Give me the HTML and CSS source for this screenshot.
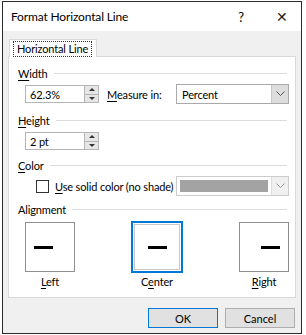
FILE: index.html
```html
<!DOCTYPE html>
<html lang="en">
  <head>
    <meta charset="UTF-8" />
    <title>Format Horizontal Line</title>
    <link rel="stylesheet" href="styles.css">
  </head>
  <body>
    <div class="window">
      <div class="titlebar">
        <span class="title">Format Horizontal Line</span>
        <span class="help">?</span>
        <span class="close">&#x2715;</span>
      </div>

      <div class="content">
        <div class="tabs">
          <div class="tab"><span class="focus">Horizontal Line</span></div>
        </div>

        <div class="panel">
          <div class="group"><span><u>W</u>idth</span></div>
          <div class="row first">
            <div class="spin">
              <div class="field">62.3%</div>
              <div class="arrows"><span class="up"></span><span class="down"></span></div>
            </div>
            <span class="measure"><u>M</u>easure in:</span>
            <div class="select">
              <div class="value">Percent</div>
              <div class="drop"><svg width="9" height="6" viewBox="0 0 9 6"><path d="M0.5 0.5 L4.5 4.5 L8.5 0.5" fill="none" stroke="#555" stroke-width="1"/></svg></div>
            </div>
          </div>

          <div class="group"><span><u>H</u>eight</span></div>
          <div class="row">
            <div class="spin">
              <div class="field">2 pt</div>
              <div class="arrows"><span class="up"></span><span class="down"></span></div>
            </div>
          </div>

          <div class="group"><span><u>C</u>olor</span></div>
          <div class="row last">
            <label class="check"><span class="box"></span><span><u>U</u>se solid color (no shade)</span></label>
            <div class="select disabled">
              <div class="value"><span class="swatch"></span></div>
              <div class="drop"><svg width="9" height="6" viewBox="0 0 9 6"><path d="M0.5 0.5 L4.5 4.5 L8.5 0.5" fill="none" stroke="#999" stroke-width="1"/></svg></div>
            </div>
          </div>

          <div class="group"><span>Alignment</span></div>
          <div class="align">
            <div class="opt">
              <div class="pic left"><span class="dash"></span></div>
              <span><u>L</u>eft</span>
            </div>
            <div class="opt">
              <div class="pic center selected"><span class="dash"></span></div>
              <span>C<u>e</u>nter</span>
            </div>
            <div class="opt">
              <div class="pic right"><span class="dash"></span></div>
              <span><u>R</u>ight</span>
            </div>
          </div>
        </div>

        <div class="buttons">
          <button class="btn default">OK</button>
          <button class="btn">Cancel</button>
        </div>
      </div>
    </div>
  </body>
</html>
```

FILE: styles.css
```css
body {
  margin: 0;
  background: #ffffff;
  font-family: Lato, Roboto, sans-serif;
  font-size: 11px;
  letter-spacing: -0.15px;
  color: #000000;
  white-space: nowrap;
}
u {
  text-decoration: underline;
  text-underline-offset: 2px;
}
.window {
  margin: 1px 0 0 2px;
  width: 298px;
  height: 331px;
  border: 1px solid #2b2b2b;
  background-color: #f0f0f0;
  display: flex;
  flex-direction: column;
}
.titlebar {
  height: 29px;
  background-color: #ffffff;
  display: flex;
  align-items: center;
  padding-left: 8px;
  font-size: 12px;
}
.title {
  flex: 1;
}
.help {
  width: 44px;
  text-align: center;
  font-size: 13px;
}
.close {
  width: 38px;
  text-align: center;
  font-size: 14px;
  color: #222;
}
.content {
  padding: 7px 5px 0 5px;
}
.tabs {
  display: flex;
  height: 18px;
}
.tab {
  background-color: #ffffff;
  border: 1px solid #d9d9d9;
  border-bottom: none;
  padding: 2px 5px 0 4px;
  margin-left: 1px;
  position: relative;
  top: 1px;
  z-index: 1;
}
.focus {
  outline: 1px dotted #333;
  padding: 0 3px;
  line-height: 14px;
  display: inline-block;
}
.panel {
  background-color: #ffffff;
  border: 1px solid #d9d9d9;
  height: 232px;
  padding: 8px 6px 0 9px;
}
.group {
  display: flex;
  align-items: center;
  gap: 6px;
  height: 17px;
  padding-right: 2px;
}
.group::after {
  content: "";
  flex: 1;
  border-top: 1px solid #dcdcdc;
}
.row {
  display: flex;
  align-items: center;
  height: 20px;
  margin: 2px 0 6px 7px;
}
.row.first {
  margin-bottom: 8px;
}
.row.last {
  margin-bottom: 5px;
}
.spin {
  display: flex;
  height: 18px;
}
.field {
  width: 54px;
  border: 1px solid #b5b5b5;
  border-right: none;
  padding-left: 4px;
  line-height: 17px;
}
.arrows {
  width: 13px;
  border: 1px solid #b5b5b5;
  display: flex;
  flex-direction: column;
  background-color: #e6e6e6;
}
.arrows span {
  flex: 1;
  display: flex;
  align-items: center;
  justify-content: center;
}
.arrows .up {
  border-bottom: 1px solid #b5b5b5;
}
.arrows .up::after {
  content: "";
  border-left: 3px solid transparent;
  border-right: 3px solid transparent;
  border-bottom: 3px solid #333;
}
.arrows .down::after {
  content: "";
  border-left: 3px solid transparent;
  border-right: 3px solid transparent;
  border-top: 3px solid #333;
}
.measure {
  margin-left: 8px;
}
.select {
  width: 111px;
  height: 18px;
  border: 1px solid #a9a9a9;
  display: flex;
  margin-left: auto;
  flex-shrink: 0;
}
.select .value {
  flex: 1;
  padding-left: 5px;
  line-height: 17px;
  display: flex;
  align-items: center;
}
.drop {
  width: 16px;
  background-color: #dddddd;
  border-left: 1px solid #c8c8c8;
  display: flex;
  align-items: center;
  justify-content: center;
}
.select.disabled {
  border-color: #cccccc;
}
.select.disabled .value {
  padding: 3px;
}
.swatch {
  display: block;
  width: 100%;
  height: 100%;
  background-color: #a3a3a3;
}
.select.disabled .drop {
  background-color: #f0f0f0;
  border-left-color: #dddddd;
}
.check {
  display: flex;
  align-items: center;
  gap: 6px;
  margin-left: 11px;
}
.box {
  width: 11px;
  height: 11px;
  border: 1px solid #333333;
  background-color: #ffffff;
}
.align {
  display: flex;
  justify-content: space-between;
  margin: 4px 0 0 7px;
}
.opt {
  display: flex;
  flex-direction: column;
  align-items: center;
  gap: 3px;
}
.pic {
  width: 50px;
  height: 50px;
  border: 1px solid #8f8f8f;
  background-color: #ffffff;
  display: flex;
  align-items: center;
  box-sizing: border-box;
}
.pic.left {
  justify-content: flex-start;
  padding-left: 8px;
}
.pic.center {
  justify-content: center;
}
.pic.right {
  justify-content: flex-end;
  padding-right: 8px;
}
.pic.selected {
  width: 52px;
  height: 52px;
  border: 2px solid #0078d7;
  box-shadow: inset 0 0 0 1px #ffffff, inset 0 0 0 2px #c9c9c9;
  margin-top: -1px;
  margin-bottom: -1px;
}
.dash {
  width: 19px;
  height: 3px;
  background-color: #000000;
}
.buttons {
  display: flex;
  justify-content: flex-end;
  gap: 7px;
  margin-top: 10px;
  padding-right: 1px;
}
.btn {
  width: 70px;
  height: 20px;
  font-family: Lato, Roboto, sans-serif;
  font-size: 11px;
  background-color: #e1e1e1;
  border: 1px solid #adadad;
  padding: 0;
}
.btn.default {
  border: 1px solid #0078d7;
}
```
